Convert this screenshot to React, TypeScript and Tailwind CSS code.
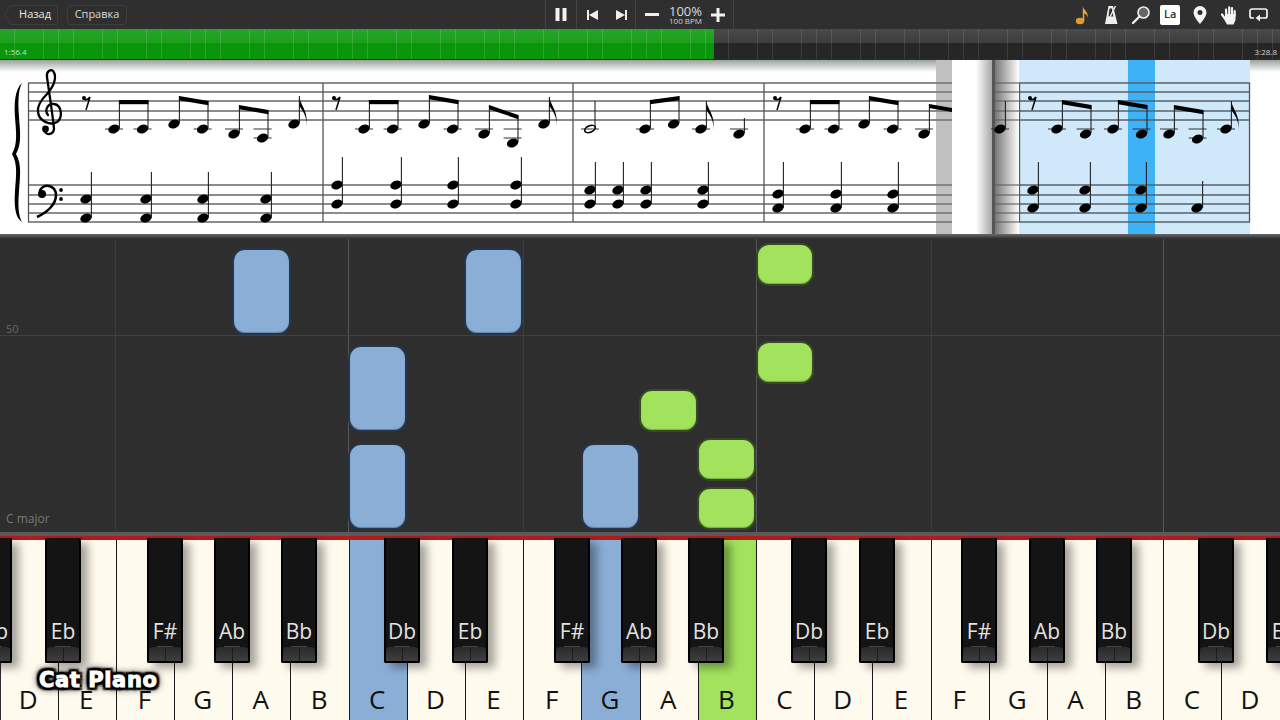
import React from "react";

const FONT = "font-['Open_Sans',sans-serif]";

// staff y positions, taken from the picture
const trebleLines = [83, 92, 101, 111, 120];
const bassLines = [185, 195, 204, 213, 222];

function Head({ x, y, hollow }: { x: number; y: number; hollow?: boolean }) {
  if (hollow) {
    return (
      <ellipse cx={x} cy={y} rx={5.6} ry={3.2} transform={`rotate(-22 ${x} ${y})`} fill="none" stroke="#000" strokeWidth={1.6} />
    );
  }
  return <ellipse cx={x} cy={y} rx={5.9} ry={4.2} transform={`rotate(-22 ${x} ${y})`} fill="#000" />;
}

function Stem({ x, y1, y2 }: { x: number; y1: number; y2: number }) {
  return <line x1={x} x2={x} y1={y1} y2={y2} stroke="#222" strokeWidth={1.1} />;
}

function Ledger({ x, y }: { x: number; y: number }) {
  return <line x1={x - 9} x2={x + 9} y1={y} y2={y} stroke="#333" strokeWidth={1} />;
}

// note with stem up, ledger lines worked out from the pitch
function Note({ x, y, top }: { x: number; y: number; top: number }) {
  return (
    <g>
      {y >= 128 && <Ledger x={x} y={129} />}
      {y >= 137 && <Ledger x={x} y={138} />}
      <Head x={x} y={y} />
      <Stem x={x + 5.4} y1={y - 1} y2={top} />
    </g>
  );
}

function Beam({ x1, y1, x2, y2 }: { x1: number; y1: number; x2: number; y2: number }) {
  return <polygon points={`${x1},${y1} ${x2},${y2} ${x2},${y2 + 4.2} ${x1},${y1 + 4.2}`} fill="#000" />;
}

function Pair({ x, y1, top1, y2, top2 }: { x: number; y1: number; top1: number; y2: number; top2: number }) {
  return (
    <g>
      <Note x={x} y={y1} top={top1} />
      <Note x={x + 28.6} y={y2} top={top2} />
      <Beam x1={x + 5} y1={top1} x2={x + 34.4} y2={top2} />
    </g>
  );
}

function Flag({ x, y }: { x: number; y: number }) {
  return <path d={`M${x} ${y}c1 9 9 13 7 30c1-12-5-17-7-21z`} fill="#000" />;
}

function Rest({ x, y }: { x: number; y: number }) {
  return (
    <g>
      <circle cx={x - 3} cy={y - 4} r={2} fill="#000" />
      <path d={`M${x - 4} ${y - 3}c2 1 5 1 7-2l-4 13`} fill="none" stroke="#000" strokeWidth={1.5} />
    </g>
  );
}

function Chord({ x, y1, y2, top }: { x: number; y1: number; y2: number; top: number }) {
  return (
    <g>
      <Head x={x} y={y1} />
      <Head x={x} y={y2} />
      <Stem x={x + 5.4} y1={y2} y2={top} />
    </g>
  );
}

function Sheet() {
  const staff = [...trebleLines, ...bassLines];
  return (
    <div className="relative h-[174px] shrink-0 bg-white">
      <div className="absolute left-0 right-0 top-0 h-3 bg-gradient-to-b from-[#9aa39a] to-white" />
      <div className="absolute bottom-0 left-[1019px] top-0 flex w-[231px] bg-[#cfe9fb]">
        <div className="ml-[109px] w-[27px] bg-[#3db2f6]" />
      </div>
      <svg className="absolute inset-0" width={1280} height={174} viewBox="0 60 1280 174">
        {/* brace */}
        <path d="M22 83c-7 6-8 20-7 34c1 14 3 27-3 37c6 10 4 23 3 37c-1 14 0 27 7 31c-4-7-4-19-3-31c1-14 3-27-3-37c6-10 4-23 3-37c-1-14-1-27 3-34z" fill="#000" />
        {staff.map((y) => (
          <g key={y}>
            <line x1={28} x2={936} y1={y} y2={y} stroke="#666" strokeWidth={1.3} />
            <line x1={995} x2={1250} y1={y} y2={y} stroke="#566068" strokeWidth={1.3} />
          </g>
        ))}
        <rect x={936} y={60} width={16} height={174} fill="#c0c0c0" />
        {staff.map((y) => (
          <line key={y} x1={936} x2={952} y1={y} y2={y} stroke="#666" strokeWidth={1.3} />
        ))}
        {[28.5, 323, 573, 764, 1019.5, 1249.5].map((x) => (
          <line key={x} x1={x} x2={x} y1={83} y2={222} stroke="#555" strokeWidth={1.3} />
        ))}

        {/* treble clef */}
        <g transform="translate(0 2)">
          <path d="M44 128c2 6 9 5 10-1c0-4-6-45-7-52c-1-6 4-8 6-6c4 5 2 14-6 23c-7 7-10 12-9 18c1 9 12 14 19 10c6-4 5-17-3-18c-6-1-10 6-6 11" fill="none" stroke="#000" strokeWidth={2.3} strokeLinecap="round" />
          <circle cx={45.5} cy={127} r={3.4} fill="#000" />
        </g>
        {/* bass clef */}
        <path d="M37 217c11-5 19-13 19-22c0-8-8-11-13-8c-5 3-3 9 1 9" fill="none" stroke="#000" strokeWidth={2.6} />
        <circle cx={42} cy={194} r={4} fill="#000" />
        <circle cx={61} cy={190} r={1.9} fill="#000" />
        <circle cx={61} cy={199} r={1.9} fill="#000" />

        {/* measure 1 */}
        <Rest x={87} y={102} />
        <Pair x={114} y1={129} top1={100} y2={129} top2={100} />
        <Pair x={174} y1={124} top1={96} y2={129} top2={101} />
        <Pair x={234} y1={134} top1={105} y2={138} top2={110} />
        <Note x={294} y={124} top={96} />
        <Flag x={299.5} y={97} />
        {[86, 146, 203, 266].map((x) => (
          <Chord key={x} x={x} y1={199} y2={218} top={172} />
        ))}

        {/* measure 2 */}
        <Rest x={337} y={102} />
        <Pair x={364} y1={129} top1={100} y2={129} top2={100} />
        <Pair x={424} y1={124} top1={95} y2={129} top2={100} />
        <Pair x={484} y1={134} top1={105} y2={143} top2={115} />
        <Note x={544} y={124} top={97} />
        <Flag x={549.5} y={97} />
        {[337, 396, 453, 516].map((x) => (
          <Chord key={x} x={x} y1={185} y2={204} top={157} />
        ))}

        {/* measure 3 */}
        <Ledger x={590} y={129} />
        <Head x={590} y={129} hollow />
        <Stem x={595} y1={128} y2={101} />
        <Pair x={645} y1={129} top1={100} y2={124} top2={96} />
        <Note x={701} y={129} top={101} />
        <Flag x={706.5} y={101} />
        <Note x={739} y={134} top={118} />
        {[590, 618, 646, 703].map((x) => (
          <Chord key={x} x={x} y1={190} y2={204} top={162} />
        ))}

        {/* measure 4 */}
        <Rest x={778} y={102} />
        <Pair x={805} y1={129} top1={100} y2={129} top2={100} />
        <Pair x={864} y1={124} top1={96} y2={129} top2={101} />
        <Note x={924} y={134} top={104} />
        <polygon points="929,104 952,108 952,112 929,108" fill="#000" />
        {[778, 836, 893].map((x) => (
          <Chord key={x} x={x} y1={194} y2={208} top={162} />
        ))}

        {/* page turn */}
        <rect x={952} y={60} width={40} height={174} fill="url(#pageFold)" />
        <rect x={992} y={60} width={3} height={174} fill="#555" />
        <rect x={995} y={60} width={24} height={174} fill="url(#pageShade)" />
        {staff.map((y) => (
          <line key={y} x1={995} x2={1019} y1={y} y2={y} stroke="#566068" strokeWidth={1.1} />
        ))}
        <Note x={1000} y={129} top={101} />

        {/* measure 5 */}
        <Rest x={1033} y={102} />
        <Pair x={1057} y1={129} top1={100} y2={134} top2={105} />
        <Pair x={1113} y1={129} top1={100} y2={134} top2={105} />
        <Pair x={1169} y1={134} top1={105} y2={139} top2={110} />
        <Note x={1226} y={129} top={101} />
        <Flag x={1231.5} y={101} />
        {[1033, 1085, 1141].map((x) => (
          <Chord key={x} x={x} y1={190} y2={208} top={162} />
        ))}
        <Head x={1197} y={208} />
        <Stem x={1202.6} y1={208} y2={181} />
        <defs>
          <linearGradient id="pageFold" x1="0" x2="1" y1="0" y2="0">
            <stop offset="0" stopColor="#fff" />
            <stop offset="0.6" stopColor="#fff" />
            <stop offset="1" stopColor="#a8a8a8" />
          </linearGradient>
          <linearGradient id="pageShade" x1="0" x2="1" y1="0" y2="0">
            <stop offset="0" stopColor="#777" />
            <stop offset="1" stopColor="#fff" />
          </linearGradient>
        </defs>
      </svg>
    </div>
  );
}

function Toolbar() {
  const slot = "flex w-[29.5px] items-center justify-center";
  return (
    <div className={`${FONT} relative flex h-[29px] shrink-0 items-center bg-[#2f2f2f] text-[11px]`}>
      <svg className="absolute left-[4px] top-[4px]" width="8" height="21" viewBox="0 0 8 21">
        <path d="M7 .5L1 10.500l6 10" fill="none" stroke="#3e3e3e" />
      </svg>
      <div className="ml-[10px] flex h-[20px] w-[48px] items-center justify-end rounded-r-sm border-y border-r border-[#3e3e3e] pr-[6px] text-[#e8e8e8]">Назад</div>
      <div className="ml-[9px] flex h-[20px] w-[60px] items-center justify-center rounded-sm border border-[#3e3e3e] text-[#d8d8d8]">Справка</div>

      <div className="ml-[418px] flex h-full items-center border-l border-[#444]">
        <div className="flex h-full w-[31px] items-center justify-center border-r border-[#444]">
          <svg width="12" height="13" viewBox="0 0 12 13"><path d="M0.5 0h4v13h-4zM7.500 0h4v13h-4z" fill="#f2f2f2" /></svg>
        </div>
        <div className="flex w-[30px] items-center justify-center">
          <svg width="11" height="10" viewBox="0 0 11 10"><path d="M0 0h2v10H0zM11 0v10L2 5z" fill="#eee" /></svg>
        </div>
        <div className="flex h-full w-[29px] items-center justify-center border-r border-[#444]">
          <svg width="11" height="10" viewBox="0 0 11 10"><path d="M9 0h2v10H9zM0 0v10l9-5z" fill="#eee" /></svg>
        </div>
        <div className="flex w-[32px] items-center justify-center">
          <svg width="14" height="4" viewBox="0 0 14 4"><path d="M0 0h14v3H0z" fill="#eee" /></svg>
        </div>
        <div className="flex w-[35px] flex-col items-center leading-none">
          <span className="text-[13px] leading-[12px] text-[#dcdcdc]">100%</span>
          <span className="whitespace-nowrap text-[8px] leading-[8px] text-[#cfcfcf]">100 BPM</span>
        </div>
        <div className="flex h-full w-[31px] items-center justify-center border-r border-[#444]">
          <svg width="14" height="14" viewBox="0 0 14 14"><path d="M5.500 0h3v5.500H14v3H8.500v5.500h-3V8.500H0v-3h5.500z" fill="#f2f2f2" /></svg>
        </div>
      </div>

      <div className="ml-[333px] flex h-full items-center">
        {/* note */}
        <div className={slot}>
          <svg width="14" height="20" viewBox="0 0 14 20">
            <ellipse cx="5" cy="16" rx="4.200" ry="3.200" fill="#dc9c2e" />
            <path d="M7.800 16V1c.6 4 6 6 5 12c-.5-3-2-4-3.500-4.500V16z" fill="#e8a838" />
          </svg>
        </div>
        {/* metronome */}
        <div className={slot}>
          <svg width="15" height="20" viewBox="0 0 15 20">
            <path d="M4.500 1h4.500l4.500 18H1z" fill="#eee" />
            <path d="M5.500 3.500h2.500l1.300 8H4.500z" fill="#2f2f2f" />
            <path d="M11.500 1L5.500 13" stroke="#eee" strokeWidth="1.400" />
          </svg>
        </div>
        {/* zoom */}
        <div className={slot}>
          <svg width="20" height="20" viewBox="0 0 20 20">
            <circle cx="12.500" cy="7.500" r="5.500" fill="#666" stroke="#eee" strokeWidth="1.600" />
            <path d="M8.500 11.500L2 18" stroke="#eee" strokeWidth="2.400" strokeLinecap="round" />
          </svg>
        </div>
        {/* labels */}
        <div className={slot}>
          <div className="flex h-[20px] w-[20px] items-center justify-center rounded-[2px] bg-white text-[11px] font-semibold text-[#333]">La</div>
        </div>
        {/* pin */}
        <div className={slot}>
          <svg width="16" height="20" viewBox="0 0 16 20">
            <path fillRule="evenodd" d="M8 1a6.500 6.500 0 0 1 6.500 6.500C14.500 12 8 19 8 19S1.500 12 1.500 7.500A6.500 6.500 0 0 1 8 1zm0 4a2.500 2.500 0 1 0 0 5a2.500 2.500 0 0 0 0-5z" fill="#f4f4f4" />
          </svg>
        </div>
        {/* hand */}
        <div className={slot}>
          <svg width="18" height="20" viewBox="0 0 18 20">
            <path d="M5 9h10.500v6l-2 4.500H7L5 16z" fill="#f4f4f4" />
            <path d="M6.300 11L6 4.500M9.200 10V2.300M12 10V3M14.700 11V6M5.500 14.500L2 9.500" fill="none" stroke="#f4f4f4" strokeWidth="2.200" strokeLinecap="round" />
          </svg>
        </div>
        {/* loop */}
        <div className={slot}>
          <svg width="19" height="14" viewBox="0 0 19 14">
            <path d="M5 10H3a2 2 0 0 1-2-2V3a2 2 0 0 1 2-2h13a2 2 0 0 1 2 2v5a2 2 0 0 1-2 2H9" fill="none" stroke="#f4f4f4" strokeWidth="1.700" />
            <path d="M11 6.500v7L6.500 10z" fill="#f4f4f4" />
          </svg>
        </div>
      </div>
    </div>
  );
}

function Progress() {
  return (
    <div className={`${FONT} relative flex h-[31px] shrink-0 border-b border-[#2a2a2a] text-[8px]`}>
      <div className="relative w-[714px] bg-[linear-gradient(to_bottom,#25a325_0%,#1f9f20_45%,#0a960a_48%,#0a960a_100%)]">
        <div className="absolute inset-0 bg-[repeating-linear-gradient(to_right,transparent_0px,transparent_14px,rgba(255,255,255,0.14)_14px,rgba(255,255,255,0.14)_14.7px)]" />
        <span className="absolute bottom-[1px] left-[4px] text-[#b9e6b9]">1:56.4</span>
      </div>
      <div className="relative flex-1 bg-[linear-gradient(to_bottom,#4a4a4a_0%,#3e3e3e_45%,#252525_48%,#262626_100%)]">
        <div className="absolute inset-0 bg-[repeating-linear-gradient(to_right,transparent_0px,transparent_14px,rgba(255,255,255,0.1)_14px,rgba(255,255,255,0.1)_14.7px)]" />
        <span className="absolute bottom-[1px] right-[3px] text-[#d0d0d0]">3:28.8</span>
      </div>
    </div>
  );
}

const notes = [
  { x: 233, y: 15, w: 57, h: 85, kind: "blue" },
  { x: 465, y: 15, w: 57, h: 85, kind: "blue" },
  { x: 349, y: 112, w: 57, h: 85, kind: "blue" },
  { x: 349, y: 210, w: 57, h: 85, kind: "blue" },
  { x: 582, y: 210, w: 57, h: 85, kind: "blue" },
  { x: 757, y: 10, w: 56, h: 41, kind: "green" },
  { x: 757, y: 108, w: 56, h: 41, kind: "green" },
  { x: 640, y: 156, w: 57, h: 41, kind: "green" },
  { x: 698, y: 205, w: 57, h: 41, kind: "green" },
  { x: 698, y: 254, w: 57, h: 41, kind: "green" },
];

function Roll() {
  return (
    <div className={`${FONT} relative h-[298px] shrink-0 overflow-hidden bg-[#2e2e2e]`}>
      <div className="h-[5px] bg-gradient-to-b from-[#6a6a6a] to-[#2e2e2e]" />
      {[115, 348, 523, 756, 931, 1163].map((x) => (
        <div key={x} className={`absolute bottom-0 top-[5px] w-px ${x === 348 || x === 756 || x === 1163 ? "bg-[#565656]" : "bg-[#3d3d3d]"}`} style={{ left: x }} />
      ))}
      <div className="absolute left-0 right-0 top-[101px] h-px bg-[#414141]" />
      <span className="absolute left-[6px] top-[87px] text-[11px] text-[#666]">50</span>
      <span className="absolute left-[6px] top-[276px] text-[12px] text-[#777]">C major</span>
      {notes.map((n) => (
        <div
          key={`${n.x}-${n.y}`}
          className={
            n.kind === "blue"
              ? "absolute rounded-[13px] border-2 border-[#26354a] bg-[#8aaed6] shadow-[inset_0_-1px_1px_rgba(60,90,130,0.5)]"
              : "absolute rounded-[13px] border-2 border-[#384a24] bg-[#a2e25d] shadow-[inset_0_-1px_1px_rgba(80,130,40,0.5)]"
          }
          style={{ left: n.x - 1, top: n.y - 1, width: n.w + 2, height: n.h + 2 }}
        />
      ))}
    </div>
  );
}

const whites = [
  { label: "D" }, { label: "E" }, { label: "F" }, { label: "G" }, { label: "A" }, { label: "B" },
  { label: "C", color: "blue" }, { label: "D" }, { label: "E" }, { label: "F" },
  { label: "G", color: "blue" }, { label: "A" }, { label: "B", color: "green" }, { label: "C" },
  { label: "D" }, { label: "E" }, { label: "F" }, { label: "G" }, { label: "A" }, { label: "B" },
  { label: "C" }, { label: "D" },
];

const blacks = [
  { x: -24, label: "Db" }, { x: 45, label: "Eb" }, { x: 147, label: "F#" }, { x: 214, label: "Ab" },
  { x: 281, label: "Bb" }, { x: 384, label: "Db" }, { x: 452, label: "Eb" }, { x: 554, label: "F#" },
  { x: 621, label: "Ab" }, { x: 688, label: "Bb" }, { x: 791, label: "Db" }, { x: 859, label: "Eb" },
  { x: 961, label: "F#" }, { x: 1029, label: "Ab" }, { x: 1096, label: "Bb" }, { x: 1198, label: "Db" },
  { x: 1266, label: "Eb" },
];

function Keyboard() {
  return (
    <div className={`${FONT} relative flex-1 overflow-hidden`}>
      <div className="h-[4px] bg-[#5a5a5a]" />
      <div className="relative z-10 h-[4px] bg-[#b01c1c]" />
      <div className="ml-[0.5px] flex h-[180px]">
        {whites.map((k, i) => (
          <div
            key={i}
            className={`flex w-[58.2px] shrink-0 items-end justify-center border-r border-[#1a1a1a] pb-[1px] pr-[2px] text-[26px] leading-[40px] text-[#111] ${
              k.color === "blue" ? "bg-[#8aaed6]" : k.color === "green" ? "bg-[#a2e25d]" : "bg-[#fefaee]"
            }`}
          >
            {k.label}
          </div>
        ))}
      </div>
      {blacks.map((k) => (
        <div
          key={k.x}
          className="absolute top-[6px] z-20 flex h-[125px] w-[36px] flex-col items-center rounded-b-[2px] border-x-[2px] border-b-[2px] border-black bg-[#141414] shadow-[7px_5px_8px_rgba(0,0,0,0.35)]"
          style={{ left: k.x }}
        >
          <span className="mt-[79px] text-[21px] leading-[28px] text-[#e2e2e2]">{k.label}</span>
          <div className="mt-[1px] h-px w-[16px] bg-[#444]" />
          <div className="mt-auto flex h-[14px] w-full justify-center rounded-t-[4px] bg-gradient-to-b from-[#2a2a2a] to-[#3e3e3e]">
            <div className="h-full w-px bg-[#1c1c1c]" />
          </div>
        </div>
      ))}
      <span className="absolute left-[39px] top-[134px] z-30 font-['DejaVu_Sans',sans-serif] text-[21px] font-bold leading-[28px] tracking-[0.6px] text-white [-webkit-text-stroke:1px_white] [text-shadow:3px_0_1px_#000,-3px_0_1px_#000,0_3px_1px_#000,0_-3px_1px_#000,3px_3px_2px_#000,-3px_3px_2px_#000,3px_-3px_2px_#000,-3px_-3px_2px_#000,0_0_8px_#000,0_0_10px_#000]">
        Cat Piano
      </span>
    </div>
  );
}

export default function App() {
  return (
    <div className="flex h-[720px] w-[1280px] flex-col overflow-hidden bg-[#2e2e2e]">
      <Toolbar />
      <Progress />
      <Sheet />
      <Roll />
      <Keyboard />
    </div>
  );
}
